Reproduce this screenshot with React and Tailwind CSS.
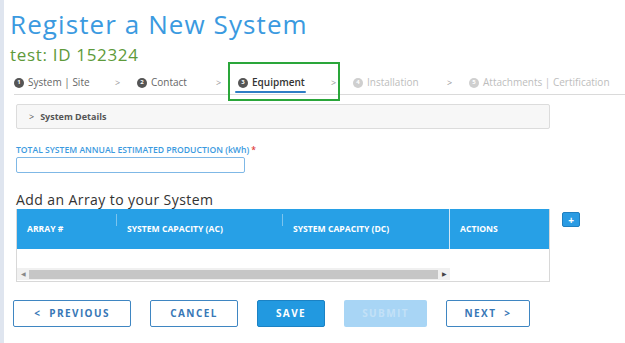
import React from 'react';

const steps = [
  { n: 1, label: 'System | Site', state: 'done', w: 'w-[101px]' },
  { n: 2, label: 'Contact', state: 'done', w: 'w-[79px]' },
  { n: 3, label: 'Equipment', state: 'active', w: 'w-[93px]' },
  { n: 4, label: 'Installation', state: 'todo', w: 'w-[94px]' },
  { n: 5, label: 'Attachments | Certification', state: 'todo', w: '' },
];

const Step = ({ n, label, state, w, last }) => {
  const circle = state === 'todo' ? 'bg-[#cfcfcf]' : 'bg-[#555]';
  const text =
    state === 'active' ? 'text-[#333] font-semibold' : state === 'todo' ? 'text-[#bdbdbd]' : 'text-[#666]';
  return (
    <div className="flex items-center h-full">
      <div className={`relative flex items-center gap-[4px] h-full ${w}`}>
        <span className={`w-[10px] h-[10px] rounded-full ${circle} text-white text-[6px] font-bold flex items-center justify-center`}>
          {n}
        </span>
        <span className={`text-[10px] ${text}`}>{label}</span>
        {state === 'active' && (
          <span className="absolute left-[-3px] w-[71px] top-[20px] h-[2px] bg-[#2e7dc4] rounded" />
        )}
      </div>
      {!last && <span className="text-[9px] text-[#999] w-[22px]">&gt;</span>}
    </div>
  );
};

const OutlineBtn = ({ children, w }) => (
  <button className={`${w} h-[27px] border border-[#3f86c2] rounded-[2px] bg-white text-[#3777b6] text-[10px] font-bold tracking-[0.14em] flex items-center justify-center`}>
    {children}
  </button>
);

export default function App() {
  return (
    <div className="w-[625px] h-[343px] bg-white flex overflow-hidden relative" style={{ fontFamily: '"Open Sans", "Liberation Sans", sans-serif' }}>
      <div className="w-[4px] bg-[#dfe5ef] shrink-0" />
      <div className="flex-1 pl-[6px]">
        <h1 className="text-[26px] leading-[30px] text-[#3b9ae0] mt-[9px] tracking-[0.042em]">Register a New System</h1>
        <div className="text-[17px] leading-[20px] text-[#5e9a3a] mt-[6px] tracking-[0.04em]">test: ID 152324</div>

        <div className="ml-[4px] mt-[6px] h-[24px] border-b border-[#dadada] flex items-center">
          {steps.map((s, i) => (
            <Step key={s.n} {...s} last={i === steps.length - 1} />
          ))}
        </div>

        <div className="ml-[6px] mt-[9px] w-[534px] h-[25px] bg-[#f7f7f7] border border-[#dcdcdc] rounded-[2px] flex items-center pl-[12px] gap-[6px]">
          <span className="text-[9px] text-[#555]">&gt;</span>
          <span className="text-[9px] font-bold text-[#555]">System Details</span>
        </div>

        <div className="ml-[6px] mt-[16px]">
          <div className="text-[8.6px] leading-[10px] text-[#3b9ae0] font-semibold">
            TOTAL SYSTEM ANNUAL ESTIMATED PRODUCTION (kWh) <span className="text-[#e04040]">*</span>
          </div>
          <div className="mt-[2px] w-[229px] h-[16px] border border-[#7fb8e6] rounded-[2px]" />
        </div>

        <div className="ml-[6px] mt-[18px] text-[14px] leading-[17px] text-[#333] tracking-[0.03em]">Add an Array to your System</div>

        <div className="ml-[6px] mt-[1px] flex items-start">
          <div className="w-[534px] border border-[#d8d8d8] border-t-0">
            <div className="h-[40px] bg-[#27a0e6] flex text-white text-[8.6px] font-bold">
              <div className="w-[100px] flex items-center pl-[10px] relative">
                ARRAY #
                <span className="absolute right-0 top-[5px] h-[12px] w-px bg-[#7cc4ee]" />
              </div>
              <div className="w-[166px] flex items-center pl-[10px] relative">
                SYSTEM CAPACITY (AC)
                <span className="absolute right-0 top-[5px] h-[12px] w-px bg-[#7cc4ee]" />
              </div>
              <div className="w-[167px] flex items-center pl-[10px] border-r border-[#cfe6f6]">SYSTEM CAPACITY (DC)</div>
              <div className="flex-1 flex items-center pl-[10px]">ACTIONS</div>
            </div>
            <div className="h-[32px] flex flex-col justify-end">
              <div className="w-[433px] h-[12px] bg-[#f0f0f0] flex items-center mb-[1px]">
                <span className="w-[12px] text-[6px] text-[#888] text-center">◀</span>
                <div className="flex-1 h-[9px] bg-[#c6c6c6]" />
                <span className="w-[12px] text-[6px] text-[#444] text-center">▶</span>
              </div>
            </div>
          </div>
          <button className="ml-[12px] mt-[3px] w-[18px] h-[15px] bg-[#2a9be3] border border-[#1f7fc0] rounded-[2px] text-white text-[10px] font-bold leading-none flex items-center justify-center">
            +
          </button>
        </div>

        <div className="ml-[3px] mt-[18px] flex gap-[19px]">
          <OutlineBtn w="w-[118px]">
            <span className="mr-[8px]">&lt;</span>PREVIOUS
          </OutlineBtn>
          <OutlineBtn w="w-[88px]">CANCEL</OutlineBtn>
          <button className="w-[68px] h-[27px] bg-[#2299e0] border border-[#1b82c4] rounded-[2px] text-white text-[10px] font-bold tracking-[0.14em]">
            SAVE
          </button>
          <button className="w-[83px] h-[27px] bg-[#a8d5f5] rounded-[2px] text-[#c3e1f7] text-[10px] font-bold tracking-[0.14em]">
            SUBMIT
          </button>
          <OutlineBtn w="w-[84px]">
            NEXT<span className="ml-[8px]">&gt;</span>
          </OutlineBtn>
        </div>
      </div>
      <div className="absolute left-[228px] top-[62px] w-[112px] h-[39px] border-2 border-[#2aa63a] pointer-events-none" />
    </div>
  );
}
